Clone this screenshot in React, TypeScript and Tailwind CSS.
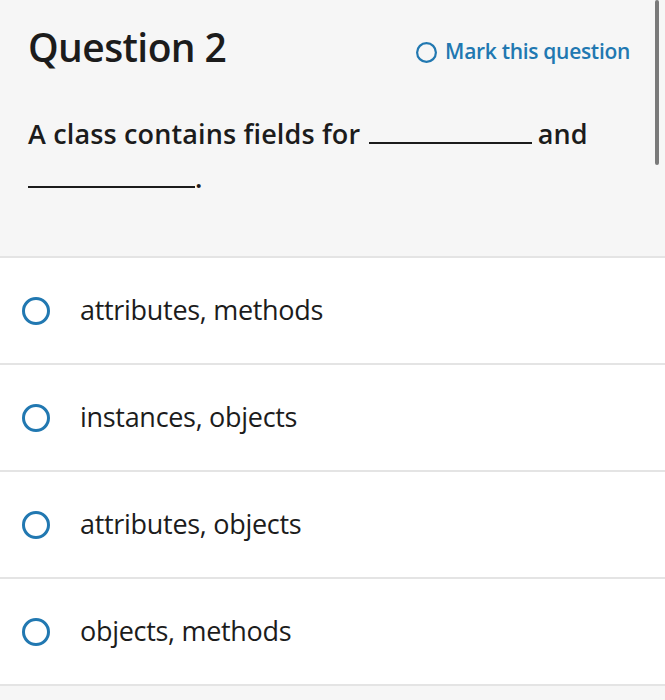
import React from "react";

const options = [
  "attributes, methods",
  "instances, objects",
  "attributes, objects",
  "objects, methods",
];

function Radio({ size = 28, stroke = 3 }: { size?: number; stroke?: number }) {
  const r = size / 2 - stroke / 2;
  return (
    <svg width={size} height={size} viewBox={`0 0 ${size} ${size}`} className="shrink-0">
      <circle cx={size / 2} cy={size / 2} r={r} fill="none" stroke="#2178b1" strokeWidth={stroke} />
    </svg>
  );
}

export default function App() {
  return (
    <div
      className="relative h-[700px] w-[665px] overflow-hidden bg-[#f6f6f6] text-[#1c1c1c] [font-variant-ligatures:none]"
      style={{ fontFamily: "'Open Sans', Lato, sans-serif" }}
    >
      {/* scrollbar */}
      <div className="absolute right-[6px] top-0 h-[165px] w-[4px] rounded-full bg-[#7a7a7a]" />

      <div className="h-[256px] px-[28px] pt-[22px]">
        <div className="flex items-center justify-between pr-[7px]">
          <h1 className="text-[39px] font-semibold leading-[50px] tracking-[-0.6px]">Question 2</h1>
          <button className="mt-[10px] flex items-center gap-[8px] text-[21px] font-semibold tracking-[-0.3px] text-[#2178b1]">
            <Radio size={21} stroke={2.2} />
            Mark this question
          </button>
        </div>
        <p className="mt-[40px] pr-[30px] text-[27px] font-semibold leading-[44px] tracking-[0.15px]">
          A class contains fields for{" "}
          <span className="ml-[2px] mr-[-2px] inline-block w-[163px] border-b-[2px] border-[#1c1c1c]" /> and{" "}
          <span className="inline-block w-[167px] border-b-[2px] border-[#1c1c1c]" />.
        </p>
      </div>

      <div className="border-t-[2px] border-[#e4e4e4] bg-white">
        {options.map((o) => (
          <div key={o} className="flex h-[107px] items-center gap-[30px] border-b-[2px] border-[#e4e4e4] pl-[22px]">
            <Radio />
            <span className="text-[27px] tracking-[-0.3px]">{o}</span>
          </div>
        ))}
      </div>
    </div>
  );
}
